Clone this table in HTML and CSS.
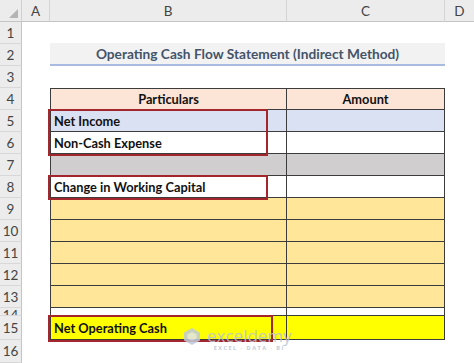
FILE: index.html
```html
<!DOCTYPE html>
<html>
<head>
<meta charset="utf-8">
<link rel="stylesheet" href="styles.css">
</head>
<body>
<div class="sheet">
  <div class="corner"><svg width="22" height="22" viewBox="0 0 22 22"><polygon points="18,9 18,18 9,18" fill="#b4b4b4"/></svg></div>
  <div class="ch">A</div>
  <div class="ch">B</div>
  <div class="ch">C</div>
  <div class="ch last">D</div>

  <div class="rh">1</div><div class="c"></div><div class="c"></div><div class="c"></div><div class="c"></div>

  <div class="rh">2</div><div class="c"></div><div class="title">Operating Cash Flow Statement (Indirect Method)</div><div class="c"></div>

  <div class="rh">3</div><div class="c"></div><div class="c"></div><div class="c"></div><div class="c"></div>

  <div class="rh">4</div><div class="c"></div><div class="d b top hd">Particulars</div><div class="d top hd">Amount</div><div class="c"></div>

  <div class="rh">5</div><div class="c"></div><div class="d b blue">Net Income</div><div class="d blue"></div><div class="c"></div>
  <div class="rh">6</div><div class="c"></div><div class="d b">Non-Cash Expense</div><div class="d"></div><div class="c"></div>
  <div class="rh">7</div><div class="c"></div><div class="d b grey"></div><div class="d grey"></div><div class="c"></div>
  <div class="rh">8</div><div class="c"></div><div class="d b">Change in Working Capital</div><div class="d"></div><div class="c"></div>
  <div class="rh">9</div><div class="c"></div><div class="d b gold"></div><div class="d gold"></div><div class="c"></div>
  <div class="rh">10</div><div class="c"></div><div class="d b gold"></div><div class="d gold"></div><div class="c"></div>
  <div class="rh">11</div><div class="c"></div><div class="d b gold"></div><div class="d gold"></div><div class="c"></div>
  <div class="rh">12</div><div class="c"></div><div class="d b gold"></div><div class="d gold"></div><div class="c"></div>
  <div class="rh">13</div><div class="c"></div><div class="d b gold"></div><div class="d gold"></div><div class="c"></div>
  <div class="rh small"><span>14</span></div><div class="c"></div><div class="d b"></div><div class="d"></div><div class="c"></div>
  <div class="rh">15</div><div class="c"></div><div class="d b yellow">Net Operating Cash</div><div class="d yellow"></div><div class="c"></div>
  <div class="rh">16</div><div class="c"></div><div class="c"></div><div class="c"></div><div class="c"></div>

  <div class="mark m1"></div>
  <div class="mark m2"></div>
  <div class="mark m3"></div>

  <div class="wm">
    <svg class="wm-logo" width="18" height="19" viewBox="0 0 18 19">
      <polygon points="9,1 17,5.5 17,13.5 9,18 1,13.5 1,5.5" fill="#bfcadb"/>
      <polygon points="9,5 13.5,7.5 13.5,11.5 9,14 4.5,11.5 4.5,7.5" fill="#dfe5ee"/>
    </svg>
    <div class="wm-text">
      <div class="wm-name">exceldemy</div>
      <div class="wm-sub">EXCEL · DATA · BI</div>
    </div>
  </div>
</div>
</body>
</html>
```

FILE: styles.css
```css
html, body {
  margin: 0;
  padding: 0;
  background: #ffffff;
}

.sheet {
  position: relative;
  display: grid;
  grid-template-columns: 22px 28px 237px 158px 29px;
  grid-template-rows: 22px repeat(13, 22px) 8px 24px 23px;
  width: 474px;
  height: 363px;
  overflow: hidden;
  font-family: Lato, "Liberation Sans", sans-serif;
}

.corner {
  background: #ececec;
  border-right: 1px solid #d0d0d0;
  border-bottom: 1px solid #c4c4c4;
  box-sizing: border-box;
}
.corner svg { display: block; }

.ch {
  background: #ececec;
  border-right: 1px solid #d4d4d4;
  border-bottom: 1px solid #c4c4c4;
  box-sizing: border-box;
  display: flex;
  align-items: center;
  justify-content: center;
  color: #444444;
  font-size: 13.5px;
}
.ch.last { border-right: none; }

.rh {
  background: #ececec;
  border-right: 1px solid #c4c4c4;
  border-bottom: 1px solid #d8d8d8;
  box-sizing: border-box;
  display: flex;
  align-items: center;
  justify-content: center;
  color: #444444;
  font-size: 13.5px;
  overflow: hidden;
}
.rh.small {
  align-items: flex-start;
}
.rh.small span {
  display: block;
  line-height: 13px;
  margin-top: 1px;
}

.c { background: #ffffff; }

.title {
  grid-column: span 2;
  background: #f2f2f2;
  border-bottom: 2px solid #a9bbe0;
  margin-top: -1px;
  box-sizing: border-box;
  display: flex;
  align-items: center;
  justify-content: center;
  color: #44546a;
  font-weight: bold;
  font-size: 13.7px;
}

.d {
  box-sizing: border-box;
  border-right: 1px solid #3c3c3c;
  border-bottom: 1px solid #3c3c3c;
  background: #ffffff;
  display: flex;
  align-items: center;
  padding-left: 3px;
  font-weight: bold;
  font-size: 12.8px;
  color: #111111;
}
.d.b { border-left: 1px solid #3c3c3c; }
.d.top { border-top: 1px solid #3c3c3c; }
.d.hd {
  background: #fce4d6;
  justify-content: center;
  padding-left: 0;
}
.d.blue { background: #d9e1f2; }
.d.grey { background: #d0cece; }
.d.gold { background: #ffe699; }
.d.yellow { background: #ffff00; }

.mark {
  position: absolute;
  border: 2px solid #a3262c;
  box-sizing: border-box;
}
.m1 { left: 48px; top: 109px; width: 220px; height: 47px; }
.m2 { left: 48px; top: 175px; width: 220px; height: 25px; }
.m3 { left: 48px; top: 315px; width: 225px; height: 27px; }

.wm {
  position: absolute;
  left: 183px;
  top: 326px;
  display: flex;
  align-items: flex-start;
  gap: 6px;
  opacity: 0.85;
}
.wm-logo { display: block; margin-top: 1px; }
.wm-text {
  display: flex;
  flex-direction: column;
  align-items: center;
}
.wm-name {
  font-family: "Open Sans", sans-serif;
  font-size: 17px;
  line-height: 19px;
  color: #b9c4d6;
}
.wm-sub {
  font-family: "Open Sans", sans-serif;
  font-size: 5.5px;
  line-height: 7px;
  color: #b9c4d6;
  letter-spacing: 1.5px;
  font-weight: bold;
}
```
